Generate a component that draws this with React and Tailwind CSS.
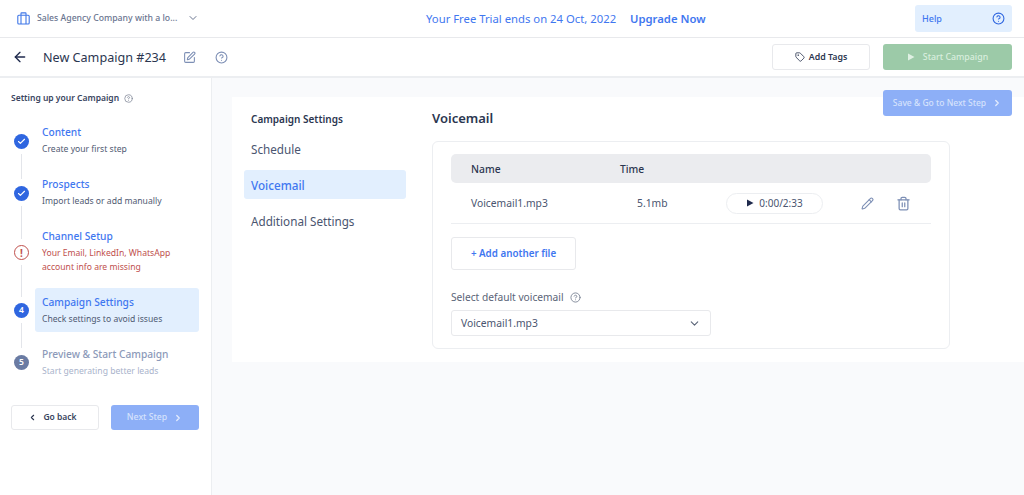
import React from "react";
import { ArrowLeft, Check, ChevronDown, ChevronLeft, ChevronRight, CircleHelp, Pencil, SquarePen, Tag, Trash2 } from "lucide-react";

function Bag() {
  return (
    <svg width="13" height="13" viewBox="0 0 13 13" fill="none" stroke="#3f77e8" strokeWidth="1.1">
      <rect x="0.8" y="3.2" width="11.4" height="8.8" rx="1" />
      <path d="M4 3V1.4c0-.3.2-.5.5-.5h4c.3 0 .5.2.5.5V3M4 3.2V12M9 3.2V12" />
    </svg>
  );
}

function Play({ color = "#1f2a4d", size = 8 }) {
  return (
    <svg width={size} height={size} viewBox="0 0 8 8">
      <path d="M1 0.5L7.5 4L1 7.5Z" fill={color} />
    </svg>
  );
}

function Step({ marker, title, desc, top, height, line, active, dim, error }) {
  return (
    <div className="flex" style={{ height }}>
      <div className="ml-[14px] flex w-[15px] shrink-0 flex-col items-center" style={{ paddingTop: top }}>
        {marker}
        {line ? <div className="mt-[5px] w-[1.5px] shrink-0 bg-[#e3e5ea]" style={{ height: line }} /> : null}
      </div>
      <div className={`ml-[6px] h-fit w-[164px] rounded-[3px] px-[7px] ${active ? "bg-[#e2effe] pt-[6px] pb-[6px]" : ""}`}>
        <div className={`text-[10.2px] leading-[16px] font-medium ${dim ? "text-[#8c9ab9]" : "text-[#3f77f0]"}`}>{title}</div>
        <div className={`mt-[2px] text-[8.6px] leading-[14px] ${error ? "text-[#c0504d]" : dim ? "text-[#a9b3cb]" : "text-[#4f5a72]"}`}>{desc}</div>
      </div>
    </div>
  );
}

const Done = (
  <div className="flex h-[15px] w-[15px] shrink-0 items-center justify-center rounded-full bg-[#2f66e0]">
    <Check size={9} color="#fff" strokeWidth={3} />
  </div>
);

function Num({ n, color }) {
  return (
    <div className={`flex h-[15px] w-[15px] shrink-0 items-center justify-center rounded-full text-[8.5px] font-semibold text-white ${color}`}>{n}</div>
  );
}

export default function App() {
  return (
    <div className="relative flex h-screen flex-col overflow-hidden bg-[#f9fafc] text-[#2b3650]" style={{ fontFamily: '"Noto Sans", sans-serif' }}>
      <header className="flex h-[38px] shrink-0 items-center border-b border-[#e8e9ec] bg-white">
        <div className="flex w-[300px] items-center pl-[17px]">
          <Bag />
          <span className="ml-[7px] w-[143px] text-[8.7px] font-medium whitespace-nowrap text-[#6a7590]">Sales Agency Company with a lo...</span>
          <ChevronDown size={12} color="#6a7590" className="ml-[7px]" />
        </div>
        <div className="ml-[126px] flex items-center pt-[2px] text-[#3f77f0]">
          <span className="w-[204px] text-[11.3px] whitespace-nowrap">Your Free Trial ends on 24 Oct, 2022</span>
          <span className="text-[11.3px] font-semibold whitespace-nowrap">Upgrade Now</span>
        </div>
        <div className="mr-[12px] ml-auto flex h-[27px] w-[97px] items-center justify-between rounded-[3px] bg-[#e2effe] px-[7px] text-[9px] font-medium text-[#3f77f0]">
          <span>Help</span>
          <CircleHelp size={13} color="#2f66e0" />
        </div>
      </header>

      <div className="flex h-[40px] shrink-0 items-center border-b-2 border-[#eceef1] bg-white">
        <ArrowLeft size={16} color="#1f2a4d" className="ml-[12px]" />
        <span className="ml-[15px] w-[140px] pt-[2px] text-[12.6px] whitespace-nowrap text-[#2b3650]">New Campaign #234</span>
        <SquarePen size={13} color="#7d8fb5" />
        <CircleHelp size={13} color="#7d8fb5" className="ml-[19px]" />
        <button className="ml-auto flex h-[26px] w-[98px] items-center justify-center gap-1 rounded-[3px] border border-[#e8e9ec] bg-white text-[8.8px] font-semibold text-[#2b3650]">
          <Tag size={10} color="#2b3650" />
          <span className="pt-px">Add Tags</span>
        </button>
        <button className="mr-[12px] ml-[13px] flex h-[26px] w-[129px] items-center justify-center gap-[8px] rounded-[3px] bg-[#9ccaa8] text-[8.8px] font-medium text-[#d9eede]">
          <Play color="#dff0e3" size={8} />
          <span className="pt-px">Start Campaign</span>
        </button>
      </div>

      <div className="flex min-h-0 flex-1">
        <aside className="w-[212px] shrink-0 border-r border-[#eceef1] bg-white">
          <div className="flex items-center pt-[13px] pl-[11px] text-[8.5px] font-semibold text-[#3a4560]">
            <span className="leading-[14px]">Setting up your Campaign</span>
            <CircleHelp size={9} color="#7d8596" className="ml-[5px]" />
          </div>
          <div className="mt-[19px]">
            <Step marker={Done} top={10} height={52} line={25} title="Content" desc="Create your first step" />
            <Step marker={Done} top={10} height={52} line={33} title="Prospects" desc="Import leads or add manually" />
            <Step
              marker={
                <div className="flex h-[15px] w-[15px] shrink-0 items-center justify-center rounded-full border-[1.5px] border-[#c0504d] text-[10px] leading-none font-bold text-[#c0504d]">!</div>
              }
              top={17}
              height={60}
              line={32}
              title="Channel Setup"
              desc={<>Your Email, LinkedIn, WhatsApp<br />account info are missing</>}
              error
            />
            <Step marker={<Num n="4" color="bg-[#2f66e0]" />} top={15} height={58} line={25} title="Campaign Settings" desc="Check settings to avoid issues" active />
            <Step marker={<Num n="5" color="bg-[#6a7ba3]" />} top={9} height={59} title="Preview & Start Campaign" desc="Start generating better leads" dim />
          </div>
          <div className="flex gap-[12px] pl-[11px]">
            <button className="flex h-[25px] w-[88px] items-center justify-center gap-[6px] rounded-[3px] border border-[#e8e9ec] bg-white pr-[5px] text-[8.5px] font-semibold text-[#3a4560]">
              <ChevronLeft size={9} color="#2b3650" strokeWidth={3} />
              Go back
            </button>
            <button className="flex h-[25px] w-[88px] items-center justify-center gap-[6px] rounded-[3px] bg-[#8dafF7] text-[8.7px] font-medium text-[#d5e2fc]">
              Next Step
              <ChevronRight size={10} color="#e3ecfd" strokeWidth={3} />
            </button>
          </div>
        </aside>

        <main className="min-w-0 flex-1 pt-[19px] pl-[20px]">
          <div className="flex h-[265px] bg-white">
            <nav className="ml-[12px] w-[162px] shrink-0 pt-[15px]">
              <div className="pl-[7px] text-[10px] leading-[14px] font-semibold text-[#2b3650]">Campaign Settings</div>
              <div className="mt-[8px] flex h-[29px] items-center pt-[2px] pl-[7px] text-[11.7px] text-[#4a5570]">Schedule</div>
              <div className="mt-[7px] flex h-[29px] items-center rounded-[3px] bg-[#e2effe] pt-[2px] pl-[7px] text-[11.7px] font-medium text-[#3f77f0]">Voicemail</div>
              <div className="mt-[7px] flex h-[29px] items-center pt-[2px] pl-[7px] text-[11.7px] text-[#4a5570]">Additional Settings</div>
            </nav>
            <section className="ml-[26px] w-[518px] shrink-0 pt-[12px]">
              <h2 className="text-[13px] leading-[18px] font-semibold text-[#2b3650]">Voicemail</h2>
              <div className="mt-[14px] h-[208px] rounded-[6px] border border-[#eceef1] px-[18px] pt-[12px]">
                <div className="flex h-[29px] items-center rounded-[5px] bg-[#ebecef] pt-[2px] text-[10.3px] font-medium text-[#2b3650]">
                  <span className="ml-[20px] w-[149px]">Name</span>
                  <span>Time</span>
                </div>
                <div className="flex h-[41px] items-center border-b border-[#eceef1] text-[10.3px] text-[#4a5570]">
                  <span className="ml-[20px] w-[166px] pt-[2px]">Voicemail1.mp3</span>
                  <span className="w-[89px] pt-[2px]">5.1mb</span>
                  <div className="flex h-[21px] w-[97px] items-center justify-center gap-[5px] rounded-full border border-[#eceef1] text-[10px]">
                    <Play size={8} />
                    0:00/2:33
                  </div>
                  <Pencil size={13} color="#7d8fb5" className="ml-[38px]" />
                  <Trash2 size={15} color="#7d8fb5" className="ml-[22px]" />
                </div>
                <button className="mt-[13px] flex h-[33px] w-[125px] items-center justify-center rounded-[3px] border border-[#e8e9ec] bg-white pt-[2px] text-[9.8px] font-semibold text-[#3f77f0]">+ Add another file</button>
                <div className="mt-[20px] flex items-center text-[10.2px] leading-[14px] text-[#5a6478]">
                  Select default voicemail
                  <CircleHelp size={11} color="#7d8596" className="ml-[6px]" />
                </div>
                <div className="mt-[6px] flex h-[26px] w-[260px] items-center justify-between rounded-[3px] border border-[#e8e9ec] px-[9px] text-[10.3px] text-[#4a5570]">
                  <span className="pt-[2px]">Voicemail1.mp3</span>
                  <ChevronDown size={13} color="#5a6478" />
                </div>
              </div>
            </section>
          </div>
        </main>
      </div>

      <button className="absolute top-[90px] right-[12px] flex h-[26px] w-[129px] items-center justify-center gap-[6px] rounded-[3px] bg-[#8dafF7] text-[8.5px] font-medium text-[#d5e2fc]">
        Save &amp; Go to Next Step
        <ChevronRight size={10} color="#e3ecfd" strokeWidth={3} />
      </button>
    </div>
  );
}
